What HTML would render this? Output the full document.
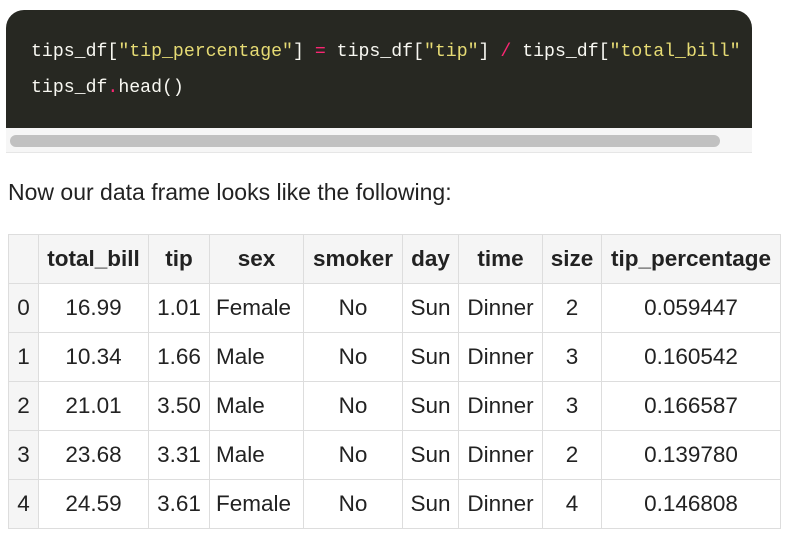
<!DOCTYPE html>
<html><head><style>
body{margin:0;background:#fff;width:796px;height:555px;overflow:hidden;position:relative;font-family:"Liberation Sans",sans-serif;}
.code{position:absolute;left:6px;top:10px;width:746px;height:118px;background:#272822;border-radius:18px 18px 0 0;overflow:hidden;}
.code pre{margin:0;position:absolute;left:25px;font-family:"Liberation Mono",monospace;font-size:18.2px;color:#f8f8f2;white-space:pre;}
.s{color:#e6db74}.o{color:#f92672}
.sb{position:absolute;left:6px;top:128px;width:746px;height:24px;background:#f6f6f6;border-bottom:1px solid #e6e6e6;}
.th{position:absolute;left:4px;top:7px;width:710px;height:12px;background:#c1c1c1;border-radius:6px;}
p{position:absolute;left:8px;top:179px;margin:0;font-size:23px;color:#222;}
table{position:absolute;left:8px;top:234px;border-collapse:collapse;font-size:22.5px;color:#222;table-layout:fixed;width:772px;}
tr{height:49px;}
td,th{border:1.5px solid #ddd;padding:0;text-align:center;}
th{font-weight:bold;background:#f5f5f5;}
td.i{background:#f5f5f5;}
td.l{text-align:left;padding-left:6px;}
</style></head><body>
<div class="code">
<pre style="top:32px">tips_df[<span class="s">"tip_percentage"</span>] <span class="o">=</span> tips_df[<span class="s">"tip"</span>] <span class="o">/</span> tips_df[<span class="s">"total_bill"</span></pre>
<pre style="top:68px">tips_df<span class="o">.</span>head()</pre>
</div>
<div class="sb"><div class="th"></div></div>
<p>Now our data frame looks like the following:</p>
<table>
<colgroup><col style="width:30px"><col style="width:110px"><col style="width:61px"><col style="width:94px"><col style="width:99px"><col style="width:56px"><col style="width:84px"><col style="width:59px"><col style="width:179px"></colgroup>
<tr><th></th><th>total_bill</th><th>tip</th><th>sex</th><th>smoker</th><th>day</th><th>time</th><th>size</th><th>tip_percentage</th></tr>
<tr><td class="i">0</td><td>16.99</td><td>1.01</td><td class="l">Female</td><td>No</td><td>Sun</td><td>Dinner</td><td>2</td><td>0.059447</td></tr>
<tr><td class="i">1</td><td>10.34</td><td>1.66</td><td class="l">Male</td><td>No</td><td>Sun</td><td>Dinner</td><td>3</td><td>0.160542</td></tr>
<tr><td class="i">2</td><td>21.01</td><td>3.50</td><td class="l">Male</td><td>No</td><td>Sun</td><td>Dinner</td><td>3</td><td>0.166587</td></tr>
<tr><td class="i">3</td><td>23.68</td><td>3.31</td><td class="l">Male</td><td>No</td><td>Sun</td><td>Dinner</td><td>2</td><td>0.139780</td></tr>
<tr><td class="i">4</td><td>24.59</td><td>3.61</td><td class="l">Female</td><td>No</td><td>Sun</td><td>Dinner</td><td>4</td><td>0.146808</td></tr>
</table>
</body></html>
